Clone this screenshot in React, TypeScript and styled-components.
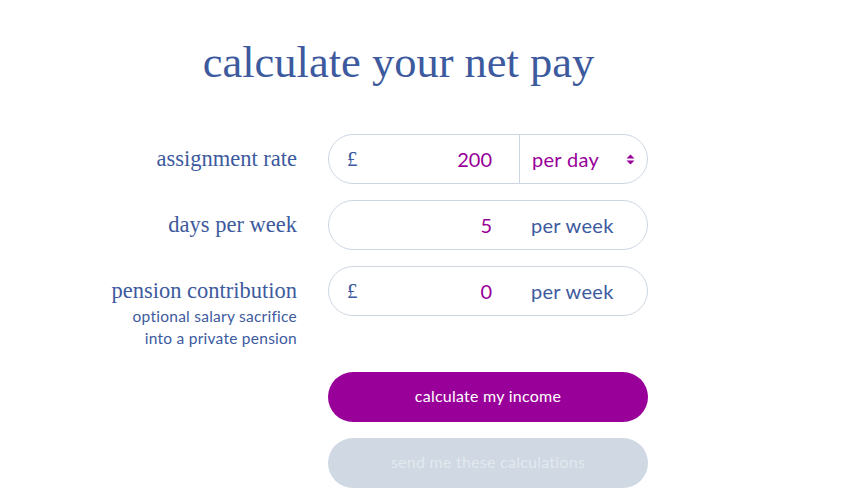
import React from 'react';
import styled, { createGlobalStyle } from 'styled-components';

const BLUE = '#3d5a9e';
const PURPLE = '#990099';
const LINE = '#cdd6e2';

const GlobalStyle = createGlobalStyle`
  body {
    margin: 0;
    background: #fff;
  }
`;

const Page = styled.div`
  width: 849px;
  padding-top: 30px;
`;

const Title = styled.h1`
  margin: 0 0 40px;
  padding-right: 52px;
  text-align: center;
  font-family: 'Liberation Serif', 'DejaVu Serif', serif;
  font-weight: 400;
  font-size: 44.5px;
  line-height: 64px;
  color: ${BLUE};
`;

const Form = styled.div`
  display: grid;
  grid-template-columns: 297px 320px;
  column-gap: 31px;
  row-gap: 16px;
`;

const Label = styled.div`
  text-align: right;
  padding-top: 11px;
`;

const LabelTitle = styled.div`
  font-family: 'Liberation Serif', 'DejaVu Serif', serif;
  font-size: 22.5px;
  line-height: 28px;
  color: ${BLUE};
`;

const LabelHint = styled.div`
  font-family: Lato, 'Open Sans', sans-serif;
  font-size: 15.5px;
  line-height: 22px;
  color: ${BLUE};
  letter-spacing: 0.25px;
`;

const Field = styled.div`
  display: flex;
  align-items: center;
  height: 50px;
  box-sizing: border-box;
  border: 1px solid ${LINE};
  border-radius: 25px;
  overflow: hidden;
`;

const Currency = styled.span`
  width: 38px;
  padding-left: 18px;
  font-family: 'Liberation Serif', 'DejaVu Serif', serif;
  font-size: 21px;
  color: ${BLUE};
`;

const Value = styled.span`
  flex: 1;
  padding-right: 27px;
  text-align: right;
  font-family: Lato, 'Open Sans', sans-serif;
  font-size: 20px;
  color: ${PURPLE};
`;

const Unit = styled.span`
  width: 128px;
  box-sizing: border-box;
  padding-left: 12px;
  font-family: Lato, 'Open Sans', sans-serif;
  font-size: 20px;
  color: ${BLUE};
  letter-spacing: 0.3px;
`;

const Select = styled.div`
  display: flex;
  align-items: center;
  justify-content: space-between;
  align-self: stretch;
  width: 128px;
  box-sizing: border-box;
  padding: 0 12px;
  border-left: 1px solid ${LINE};
  font-family: Lato, 'Open Sans', sans-serif;
  font-size: 20px;
  color: ${PURPLE};
  letter-spacing: 0.3px;
`;

const Button = styled.button<{ $disabled?: boolean }>`
  height: 50px;
  border: none;
  border-radius: 25px;
  background: ${(p) => (p.$disabled ? '#cfd8e3' : PURPLE)};
  color: ${(p) => (p.$disabled ? '#e3e8ef' : '#fff')};
  font-family: Lato, 'Open Sans', sans-serif;
  font-size: 16px;
  letter-spacing: 0.25px;
  padding: 0 0 3px;
`;

const FirstButton = styled(Button)`
  margin-top: 7px;
`;

const Arrows = () => (
  <svg width="9" height="11" viewBox="0 0 9 11">
    <path d="M4.5 0.5 L8.5 4.5 H0.5 Z M4.5 10.5 L8.5 6.5 H0.5 Z" fill={PURPLE} />
  </svg>
);

const App = () => (
  <>
    <GlobalStyle />
    <Page>
      <Title>calculate your net pay</Title>
      <Form>
        <Label>
          <LabelTitle>assignment rate</LabelTitle>
        </Label>
        <Field>
          <Currency>£</Currency>
          <Value>200</Value>
          <Select>
            <span>per day</span>
            <Arrows />
          </Select>
        </Field>

        <Label>
          <LabelTitle>days per week</LabelTitle>
        </Label>
        <Field>
          <Value>5</Value>
          <Unit>per week</Unit>
        </Field>

        <Label>
          <LabelTitle>pension contribution</LabelTitle>
          <LabelHint>optional salary sacrifice</LabelHint>
          <LabelHint>into a private pension</LabelHint>
        </Label>
        <Field>
          <Currency>£</Currency>
          <Value>0</Value>
          <Unit>per week</Unit>
        </Field>

        <div />
        <FirstButton>calculate my income</FirstButton>
        <div />
        <Button $disabled>send me these calculations</Button>
      </Form>
    </Page>
  </>
);

export default App;
